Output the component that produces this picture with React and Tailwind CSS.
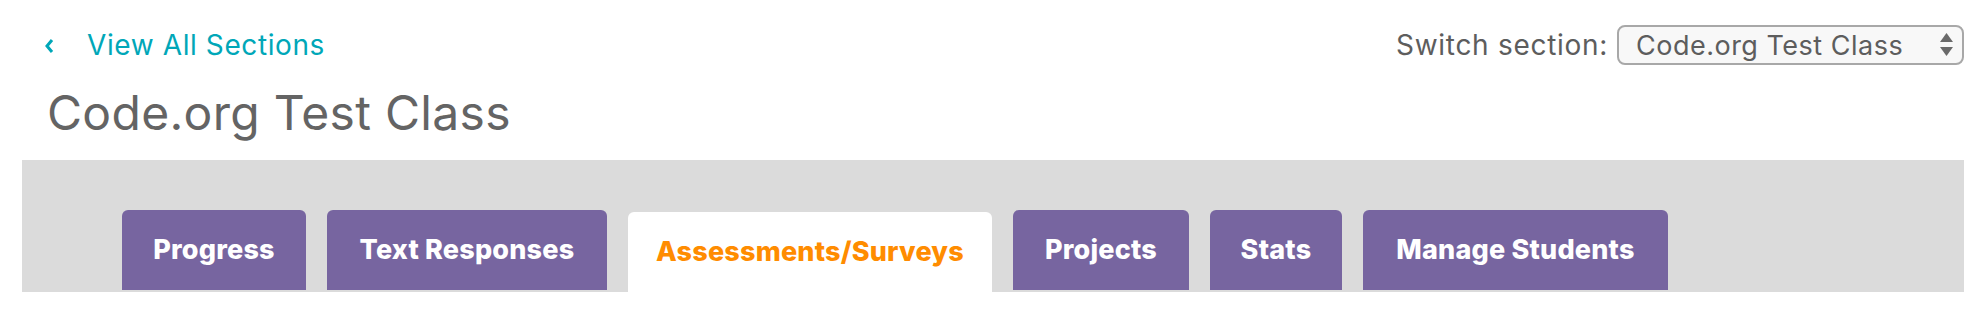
import React from "react";

const tabs = [
  { label: "Progress", w: "w-[184px]" },
  { label: "Text Responses", w: "w-[280px]" },
  { label: "Assessments/Surveys", w: "w-[364px]", active: true },
  { label: "Projects", w: "w-[176px]" },
  { label: "Stats", w: "w-[132px]" },
  { label: "Manage Students", w: "w-[305px]" },
];

export default function App() {
  return (
    <div className="w-[1986px] h-[310px] bg-white px-[22px] font-['Inter',sans-serif] overflow-hidden">
      {/* HEADER */}
      <div className="flex items-center justify-between pt-[25px] h-[65px]">
        <a className="flex items-center pl-[23px] text-[#00a7b8] text-[28px] leading-none tracking-[0.6px]">
          <svg width="9" height="16" viewBox="0 0 9 16" className="mr-[33px] mt-[1px]">
            <polyline points="7,2 2,8 7,14" fill="none" stroke="#00a7b8" strokeWidth="3" />
          </svg>
          <span>View All Sections</span>
        </a>

        <div className="flex items-center gap-[9px]">
          <span className="text-[28px] text-[#5d5d5d] leading-none tracking-[0.7px]">Switch section:</span>
          <div className="relative w-[347px] h-[40px] rounded-[8px] border-2 border-[#a8a8a8] bg-[#f8f8f8] flex items-center pl-[17px]">
            <span className="text-[27px] text-[#5d5d5d] leading-none tracking-[0.5px]">Code.org Test Class</span>
            <svg width="13" height="24" viewBox="0 0 13 24" className="absolute right-[9px] top-[6px]">
              <polygon points="6.5,0 13,9 0,9" fill="#6a6a6a" />
              <polygon points="0,14 13,14 6.5,23" fill="#6a6a6a" />
            </svg>
          </div>
        </div>
      </div>

      {/* TITLE */}
      <h1 className="mt-[24px] pl-[25px] text-[48px] leading-[48px] text-[#646464] font-normal tracking-[0.3px]">
        Code.org Test Class
      </h1>

      {/* TABS */}
      <div className="mt-[23px] h-[132px] bg-[#dbdbdb] flex items-end gap-[21px] pl-[100px]">
        {tabs.map((t) =>
          t.active ? (
            <div
              key={t.label}
              className={`${t.w} h-[80px] bg-white rounded-t-[6px] flex items-center justify-center text-[27px] font-extrabold text-[#ff8c00] tracking-[0.2px]`}
            >
              {t.label}
            </div>
          ) : (
            <div
              key={t.label}
              className={`${t.w} h-[80px] mb-[2px] bg-[#7765a0] rounded-t-[6px] flex items-center justify-center text-[27px] font-extrabold text-white tracking-[0.2px]`}
            >
              {t.label}
            </div>
          )
        )}
      </div>
    </div>
  );
}
